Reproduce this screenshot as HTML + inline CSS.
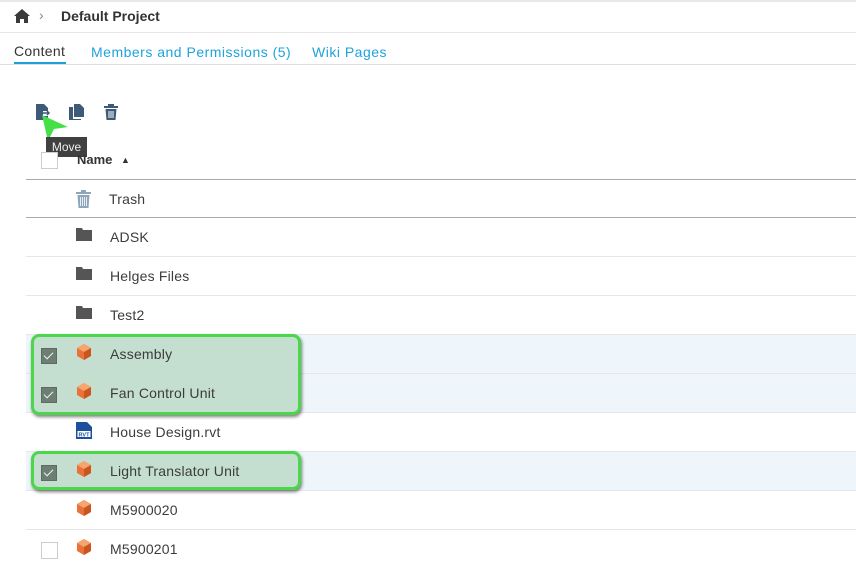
<!DOCTYPE html><html><head><style>
body{margin:0;width:856px;height:547px;overflow:hidden;background:#fff;font-family:"Liberation Sans",sans-serif;position:relative;color:#3c3c3c}
.a{position:absolute}
.row{position:absolute;left:26px;right:0;height:38px;border-bottom:1px solid #e6e6e6}
.t{position:absolute;left:110px;font-size:14px;top:11px;color:#3c3c3c;letter-spacing:0.2px}
.ic{position:absolute;left:76px;top:10px}
.cb{position:absolute;left:15px;top:13px;width:14px;height:14px;background:#6e7e74;border:1px solid #5d6b62}
.cb:after{content:"";position:absolute;left:4px;top:1px;width:4px;height:8px;border:solid #dfe;border-width:0 1.5px 1.5px 0;transform:rotate(45deg)}
</style></head><body>
<div class="a" style="left:0;top:0;width:856px;height:2px;background:#e8e8e8"></div>
<svg class="a" style="left:13px;top:8px" width="18" height="16" viewBox="0 0 18 16"><path d="M9 1L1 8h2v7h4v-4h4v4h4V8h2z" fill="#3a3a3a"/></svg>
<div class="a" style="left:39px;top:7px;font-size:14px;color:#888">&#8250;</div>
<div class="a" style="left:61px;top:8px;font-size:14px;font-weight:bold;color:#333">Default Project</div>
<div class="a" style="left:0;top:32px;width:856px;height:1px;background:#e6e6e6"></div>
<div class="a" style="left:14px;top:43px;font-size:14px;color:#333;letter-spacing:0.3px">Content</div>
<div class="a" style="left:14px;top:62px;width:52px;height:2px;background:#1e9fd8"></div>
<div class="a" style="left:91px;top:44px;font-size:14px;color:#1ea3dc;letter-spacing:0.5px">Members and Permissions (5)</div>
<div class="a" style="left:312px;top:44px;font-size:14px;color:#1ea3dc;letter-spacing:0.5px">Wiki Pages</div>
<div class="a" style="left:0;top:64px;width:856px;height:1px;background:#ddd"></div>
<svg class="a" style="left:35px;top:104px" width="16" height="16"><path d="M1 0h8l4 4v3H8v5h5v4H1z" fill="#3d5a78"/><path d="M8 9h6M12 7l2 2-2 2" stroke="#3d5a78" stroke-width="1.5" fill="none"/></svg>
<svg class="a" style="left:69px;top:104px" width="16" height="16"><path d="M5 0h6l4 4v9H5z" fill="#3d5a78"/><path d="M0 3h4v12h8v1H0z" fill="#3d5a78"/></svg>
<svg class="a" style="left:104px;top:104px" width="14" height="16"><path d="M0 2h14v2H0zM4 0h6v2H4zM1.5 5h11l-1 11h-9z" fill="#3d5a78"/><path d="M5 7v7M7 7v7M9 7v7" stroke="#fff" stroke-width="1"/></svg>
<svg class="a" style="left:40px;top:115px" width="30" height="26"><path d="M2 0L28 12L14 14L8 26Z" fill="#45e045"/></svg>
<div class="a" style="left:46px;top:137px;width:41px;height:20px;background:#404040;color:#eee;font-size:12px;line-height:20px;text-align:center">Move</div>
<div class="a" style="left:41px;top:152px;width:15px;height:15px;border:1px solid #ccc;background:#fff"></div>
<div class="a" style="left:77px;top:152px;font-size:13px;font-weight:bold;color:#333">Name</div>
<div class="a" style="left:121px;top:155px;font-size:9px;color:#333">&#9650;</div>
<div class="a" style="left:26px;top:179px;width:830px;height:1px;background:#aaa"></div>
<div class="row" style="top:179px;border-bottom-color:#aaa"><svg class="ic" style="left:50px;top:11px" width="15" height="18"><path d="M0 2h15v2H0zM5 0h5v2H5zM1.5 5h12l-1 13h-10z" fill="#8fa5ba"/><path d="M4.5 7v9M6.5 7v9M8.5 7v9M10.5 7v9" stroke="#e8eef4"/></svg><div class="t" style="left:83px;top:12px">Trash</div></div>
<div class="row" style="top:218px"><svg class="ic" style="left:50px" width="16" height="13"><path d="M0 0h6l1 2h9v11H0z" fill="#555"/></svg><div class="t" style="left:84px">ADSK</div></div>
<div class="row" style="top:257px"><svg class="ic" style="left:50px" width="16" height="13"><path d="M0 0h6l1 2h9v11H0z" fill="#555"/></svg><div class="t" style="left:84px">Helges Files</div></div>
<div class="row" style="top:296px"><svg class="ic" style="left:50px" width="16" height="13"><path d="M0 0h6l1 2h9v11H0z" fill="#555"/></svg><div class="t" style="left:84px">Test2</div></div>
<div class="row" style="top:335px;background:#eef6fb"></div>
<div class="row" style="top:374px;background:#eef6fb"></div>
<div class="row" style="top:413px"><svg class="ic" style="left:50px;top:9px" width="16" height="17"><path d="M0 0h11l5 5v12H0z" fill="#1c4f9c"/><rect x="1.5" y="9" width="13" height="6" fill="#fff"/><text x="8" y="14.3" font-size="5.5" font-weight="bold" fill="#1c4f9c" text-anchor="middle" font-family="Liberation Sans">RVT</text></svg><div class="t" style="left:84px">House Design.rvt</div></div>
<div class="row" style="top:452px;background:#eef6fb"></div>
<div class="row" style="top:491px"></div>
<div class="row" style="top:530px;border:none"></div>
<div class="a" style="left:31px;top:334px;width:264px;height:75px;border:3px solid #4cd64c;border-radius:8px;background:#c4dfcf;box-shadow:1px 2px 3px rgba(0,0,0,.5)"></div>
<div class="a" style="left:31px;top:451px;width:264px;height:33px;border:3px solid #4cd64c;border-radius:8px;background:#c4dfcf;box-shadow:1px 2px 3px rgba(0,0,0,.5)"></div>
<svg width="0" height="0" style="position:absolute"><defs><g id="cube"><path d="M8 0L15 4V12L8 16L1 12V4Z" fill="#e8733a"/><path d="M8 0L15 4L8 8L1 4Z" fill="#f6a56e"/><path d="M8 8L15 4V12L8 16Z" fill="#c9561f"/></g></defs></svg>
<div class="row" style="top:335px;border:none"><div class="cb"></div><svg class="ic" style="left:50px;top:9px" width="16" height="16"><use href="#cube"/></svg><div class="t" style="left:84px">Assembly</div></div>
<div class="row" style="top:374px;border:none"><div class="cb"></div><svg class="ic" style="left:50px;top:9px" width="16" height="16"><use href="#cube"/></svg><div class="t" style="left:84px">Fan Control Unit</div></div>
<div class="row" style="top:452px;border:none"><div class="cb"></div><svg class="ic" style="left:50px;top:9px" width="16" height="16"><use href="#cube"/></svg><div class="t" style="left:84px">Light Translator Unit</div></div>
<div class="row" style="top:491px;border:none"><svg class="ic" style="left:50px;top:9px" width="16" height="16"><use href="#cube"/></svg><div class="t" style="left:84px">M5900020</div></div>
<div class="row" style="top:530px;border:none"><div class="a" style="left:15px;top:12px;width:15px;height:15px;border:1px solid #ccc"></div><svg class="ic" style="left:50px;top:9px" width="16" height="16"><use href="#cube"/></svg><div class="t" style="left:84px">M5900201</div></div>
</body></html>
